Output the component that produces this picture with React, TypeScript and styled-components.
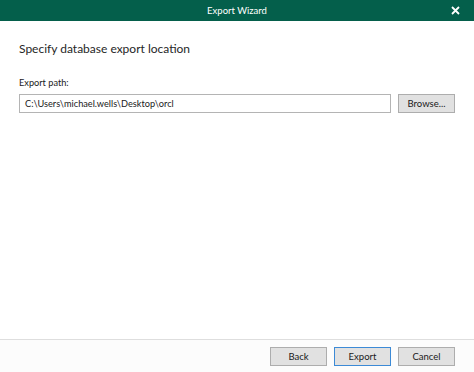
import React from 'react'
import styled, { createGlobalStyle } from 'styled-components'

const GlobalStyle = createGlobalStyle`
  html, body {
    margin: 0;
    padding: 0;
    background: #ffffff;
  }
  body {
    font-family: Lato, "Noto Sans", sans-serif;
    color: #1a1a1a;
  }
`

const Window = styled.div`
  width: 474px;
  height: 372px;
  display: flex;
  flex-direction: column;
  background: #ffffff;
`

const TitleBar = styled.div`
  height: 21px;
  background: #045f4b;
  display: flex;
  align-items: center;
  justify-content: center;
  position: relative;
  color: #ffffff;
  font-size: 9.5px;
`

const CloseButton = styled.div`
  position: absolute;
  right: 14px;
  top: 6px;
  width: 9px;
  height: 9px;
  display: flex;
`

const Body = styled.div`
  flex: 1;
  padding: 18px 19px 0 19px;
  display: flex;
  flex-direction: column;
`

const Heading = styled.div`
  font-size: 12px;
  line-height: 20px;
  color: #262626;
`

const Label = styled.div`
  margin-top: 17px;
  font-size: 9.2px;
  line-height: 14px;
`

const PathRow = styled.div`
  margin-top: 4px;
  display: flex;
  align-items: center;
  gap: 7px;
`

const PathInput = styled.div`
  flex: 1;
  height: 19px;
  border: 1px solid #b4b4b4;
  box-sizing: border-box;
  padding: 0 5px;
  display: flex;
  align-items: center;
  font-size: 9.2px;
  background: #ffffff;
`

const Button = styled.div<{ $focused?: boolean }>`
  width: 57px;
  height: 19px;
  box-sizing: border-box;
  border: 1px solid ${p => (p.$focused ? '#3c8ad6' : '#adadad')};
  background: #e1e1e1;
  display: flex;
  align-items: center;
  justify-content: center;
  font-size: 9.5px;
  color: #1a1a1a;
`

const Footer = styled.div`
  height: 33px;
  border-top: 1px solid #dedede;
  background: #fcfcfc;
  display: flex;
  justify-content: flex-end;
  align-items: flex-start;
  padding: 7px 19px 0 0;
  box-sizing: border-box;
  gap: 7px;
`

const App = () => {
  return (
    <>
      <GlobalStyle />
      <Window>
        <TitleBar>
          Export Wizard
          <CloseButton>
            <svg width="9" height="9" viewBox="0 0 9 9">
              <path d="M1 1 L8 8 M8 1 L1 8" stroke="#fff" strokeWidth="1.8" />
            </svg>
          </CloseButton>
        </TitleBar>
        <Body>
          <Heading>Specify database export location</Heading>
          <Label>Export path:</Label>
          <PathRow>
            <PathInput>C:\Users\michael.wells\Desktop\orcl</PathInput>
            <Button>Browse...</Button>
          </PathRow>
        </Body>
        <Footer>
          <Button>Back</Button>
          <Button $focused>Export</Button>
          <Button>Cancel</Button>
        </Footer>
      </Window>
    </>
  )
}

export default App
